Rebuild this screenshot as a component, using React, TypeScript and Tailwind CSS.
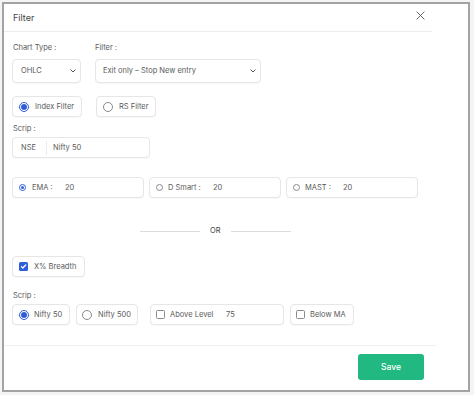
import React from 'react';

function Radio({ checked, size = 9 }: { checked?: boolean; size?: number }) {
  return (
    <span
      className={`flex items-center justify-center rounded-full border shrink-0 ${
        checked ? 'border-[#2f5fd8]' : 'border-[#8a8a8a]'
      }`}
      style={{ width: size, height: size }}
    >
      {checked && <span className="rounded-full bg-[#2f5fd8]" style={{ width: size - 4, height: size - 4 }} />}
    </span>
  );
}

function Check({ checked }: { checked?: boolean }) {
  if (checked) {
    return (
      <span className="flex h-[9px] w-[9px] shrink-0 items-center justify-center rounded-[1.5px] bg-[#2f5fd8]">
        <svg width="7" height="7" viewBox="0 0 10 10" fill="none">
          <path d="M2 5.2l2 2L8.2 2.8" stroke="white" strokeWidth="1.8" strokeLinecap="round" strokeLinejoin="round" />
        </svg>
      </span>
    );
  }
  return <span className="h-[9px] w-[9px] shrink-0 rounded-[1.5px] border border-[#8a8a8a]" />;
}

function Chevron() {
  return (
    <svg width="6" height="4" viewBox="0 0 6 4" fill="none">
      <path d="M0.8 0.8L3 3L5.2 0.8" stroke="#555" strokeWidth="1" strokeLinecap="round" strokeLinejoin="round" />
    </svg>
  );
}

const box = 'flex items-center rounded-[4px] border border-[#e6e6e6] bg-white shadow-[0_1px_1px_rgba(0,0,0,0.03)]';

export default function App() {
  return (
    <div className="h-[395px] w-[474px] bg-[#f4f4f4] pt-[2px] pl-[2px] font-['Inter',sans-serif] text-[7.5px] text-[#5a5a5a]">
      <div className="flex h-[390px] w-[468px] flex-col border-2 border-[#a3a3a3] bg-white">
        {/* header */}
        <div className="flex h-[28px] w-[428px] items-center justify-between border-b border-[#ececec] pl-[9px]">
          <span className="text-[9px] text-[#444]">Filter</span>
          <svg width="9" height="9" viewBox="0 0 10 10" className="mr-[7px] mb-[4px]">
            <path d="M1 1L9 9M9 1L1 9" stroke="#555" strokeWidth="1" strokeLinecap="round" />
          </svg>
        </div>

        {/* body */}
        <div className="flex h-[313px] flex-col px-[8px]">
          <div className="mt-[11px] flex leading-[10px]">
            <div className="flex flex-col">
              <span className="pl-[1px]">Chart Type :</span>
              <div className={`${box} mt-[6px] h-[24px] w-[69px] justify-between pl-[8px] pr-[4px]`}>
                <span>OHLC</span>
                <Chevron />
              </div>
            </div>
            <div className="ml-[14px] flex flex-col">
              <span>Filter :</span>
              <div className={`${box} mt-[6px] h-[24px] w-[166px] justify-between pl-[7px] pr-[4px]`}>
                <span>Exit only – Stop New entry</span>
                <Chevron />
              </div>
            </div>
          </div>

          <div className="mt-[13px] flex gap-[14px]">
            <div className={`${box} h-[21px] w-[70px] gap-[6px] pl-[6px]`}>
              <Radio checked size={10} />
              <span>Index Filter</span>
            </div>
            <div className={`${box} h-[21px] w-[60px] gap-[6px] pl-[6px]`}>
              <Radio size={10} />
              <span>RS Filter</span>
            </div>
          </div>

          <span className="mt-[7px] pl-[1px] leading-[10px]">Scrip :</span>
          <div className={`${box} mt-[3px] h-[21px] w-[138px]`}>
            <span className="w-[34px] border-r border-[#ececec] pl-[8px] leading-[14px]">NSE</span>
            <span className="pl-[6px]">Nifty 50</span>
          </div>

          <div className="mt-[19px] flex gap-[5px]">
            <div className={`${box} h-[21px] w-[132px] pl-[6px]`}>
              <Radio checked size={7} />
              <span className="ml-[6px] w-[33px]">EMA :</span>
              <span>20</span>
            </div>
            <div className={`${box} h-[21px] w-[132px] pl-[6px]`}>
              <Radio size={7} />
              <span className="ml-[5px] w-[45px]">D Smart :</span>
              <span>20</span>
            </div>
            <div className={`${box} h-[21px] w-[132px] pl-[6px]`}>
              <Radio size={7} />
              <span className="ml-[5px] w-[38px]">MAST :</span>
              <span>20</span>
            </div>
          </div>

          <div className="mt-[28px] flex h-[10px] items-center pl-[128px]">
            <span className="h-px w-[60px] bg-[#dcdcdc]" />
            <span className="mx-[10px] text-[#444]">OR</span>
            <span className="h-px w-[60px] bg-[#dcdcdc]" />
          </div>

          <div className={`${box} mt-[20px] h-[21px] w-[73px] gap-[6px] pl-[6px]`}>
            <Check checked />
            <span>X% Breadth</span>
          </div>

          <span className="mt-[14px] pl-[1px] leading-[10px]">Scrip :</span>
          <div className="mt-[3px] flex">
            <div className={`${box} h-[21px] w-[58px] gap-[5px] pl-[6px]`}>
              <Radio checked size={10} />
              <span>Nifty 50</span>
            </div>
            <div className={`${box} ml-[6px] h-[21px] w-[62px] gap-[6px] pl-[5px]`}>
              <Radio size={10} />
              <span>Nifty 500</span>
            </div>
            <div className={`${box} ml-[12px] h-[21px] w-[134px] pl-[5px]`}>
              <Check />
              <span className="ml-[5px] w-[56px]">Above Level</span>
              <span>75</span>
            </div>
            <div className={`${box} ml-[6px] h-[21px] w-[64px] gap-[5px] pl-[5px]`}>
              <Check />
              <span>Below MA</span>
            </div>
          </div>
        </div>

        {/* footer */}
        <div className="w-[432px] border-t border-[#efefef]">
          <div className="flex justify-end pt-[8px] pr-[12px]">
            <button className="h-[26px] w-[66px] rounded-[3px] bg-[#21b981] text-[8.5px] font-medium text-white">
              Save
            </button>
          </div>
        </div>
      </div>
    </div>
  );
}
